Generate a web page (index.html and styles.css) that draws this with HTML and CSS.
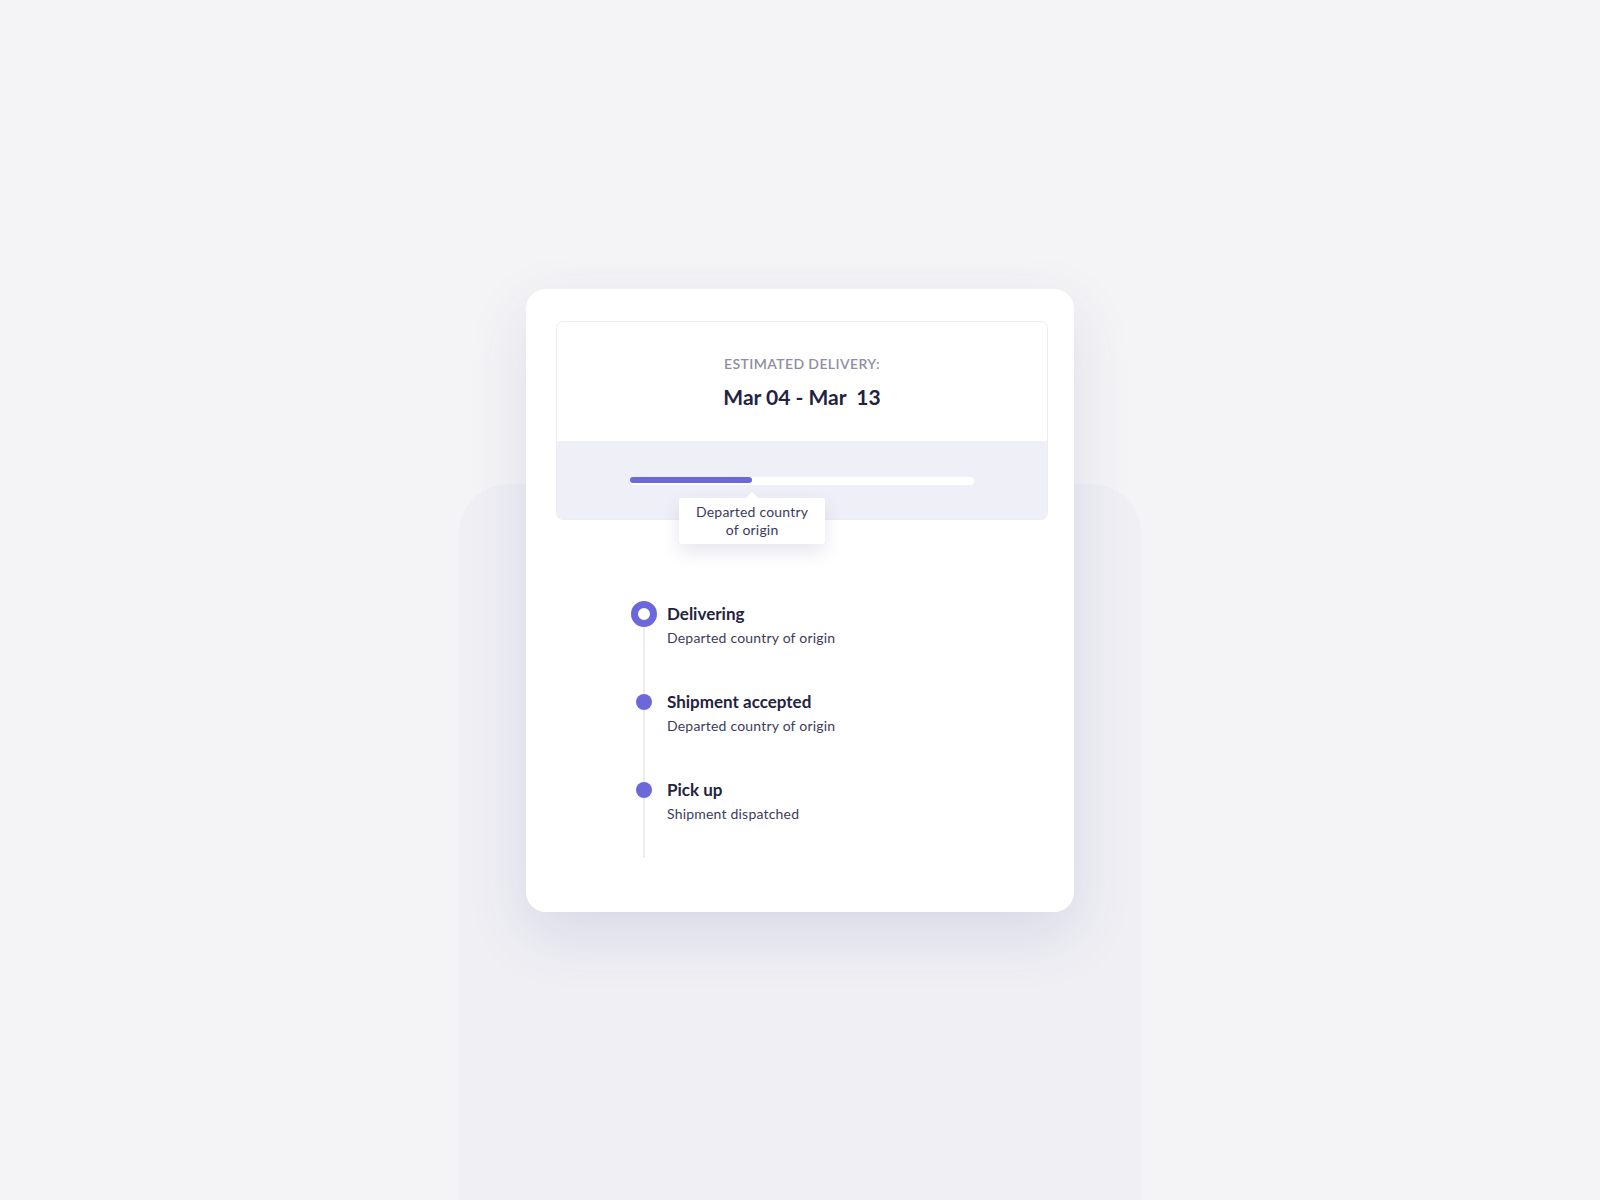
FILE: index.html
```html
<!DOCTYPE html>
<html lang="en">
<head>
    <meta charset="UTF-8">
    <meta name="viewport" content="width=device-width, initial-scale=1.0">
    <title>Tracking</title>
    <link rel="stylesheet" href="styles.css">
</head>
<body>
    <div class="stage">
        <div class="backdrop"></div>

        <div class="card">
            <div class="estimate">
                <div class="estimate-head">
                    <div class="estimate-label">Estimated delivery:</div>
                    <div class="estimate-date">Mar 04 - Mar&nbsp; 13</div>
                </div>
                <div class="estimate-progress">
                    <div class="track">
                        <div class="fill" style="width: 35.5%"></div>
                        <div class="tip" style="left: 35.5%">Departed country<br>of origin</div>
                    </div>
                </div>
            </div>

            <ul class="timeline">
                <li class="step">
                    <span class="marker current"></span>
                    <div class="step-text">
                        <div class="step-title">Delivering</div>
                        <div class="step-sub">Departed country of origin</div>
                    </div>
                </li>
                <li class="step">
                    <span class="marker"></span>
                    <div class="step-text">
                        <div class="step-title">Shipment accepted</div>
                        <div class="step-sub">Departed country of origin</div>
                    </div>
                </li>
                <li class="step">
                    <span class="marker"></span>
                    <div class="step-text">
                        <div class="step-title">Pick up</div>
                        <div class="step-sub">Shipment dispatched</div>
                    </div>
                </li>
            </ul>
        </div>
    </div>
</body>
</html>
```

FILE: styles.css
```css
body{
    margin: 0;
    font-family: "Lato", "Noto Sans", sans-serif;
    color: #24233f;
    background-color: #f4f4f6;
}
.stage{
    position: relative;
    height: 1200px;
    overflow: hidden;
    padding-top: 289px;
    box-sizing: border-box;
}
.backdrop{
    position: absolute;
    left: 459px;
    top: 484px;
    width: 682px;
    height: 800px;
    border-radius: 50px;
    background-color: #efeff4;
}
.card{
    position: relative;
    width: 548px;
    margin: 0 auto;
    padding: 32px 26px 47px 30px;
    box-sizing: border-box;
    background-color: #fff;
    border-radius: 20px;
    box-shadow: 0 22px 60px rgba(70, 70, 150, 0.13);
}
.estimate{
    border: 1px solid #ececf4;
    border-radius: 7px;
}
.estimate-head{
    padding: 33px 0 31px;
    text-align: center;
}
.estimate-label{
    font-size: 14px;
    line-height: 18px;
    font-weight: 600;
    text-transform: uppercase;
    letter-spacing: 0.4px;
    color: #8f8ea4;
}
.estimate-date{
    margin-top: 11px;
    font-size: 21px;
    line-height: 26px;
    font-weight: 700;
    color: #24233f;
}
.estimate-progress{
    height: 78px;
    padding-top: 35px;
    box-sizing: border-box;
    background-color: #efeff8;
    border-radius: 0 0 6px 6px;
}
.track{
    position: relative;
    width: 344px;
    height: 8px;
    margin: 0 auto;
    background-color: #fff;
    border-radius: 4px;
}
.fill{
    height: 6px;
    margin-top: 1px;
    background-color: #6b69d9;
    border-radius: 3px;
}
.tip{
    position: absolute;
    top: 21px;
    width: 146px;
    padding: 5px 0;
    transform: translateX(-50%);
    background-color: #fff;
    border-radius: 3px;
    box-shadow: 0 8px 18px rgba(60, 60, 120, 0.13);
    font-size: 14px;
    line-height: 18px;
    letter-spacing: 0.2px;
    text-align: center;
    color: #3b3a58;
}
.tip::before{
    content: "";
    position: absolute;
    top: -12px;
    left: 50%;
    margin-left: -6px;
    border: 6px solid transparent;
    border-bottom-color: #fff;
}
.timeline{
    position: relative;
    list-style: none;
    margin: 81px 0 0 75px;
    padding: 0;
}
.timeline::before{
    content: "";
    position: absolute;
    left: 12px;
    top: 13px;
    bottom: 7px;
    width: 2px;
    background-color: #ececf3;
}
.step{
    position: relative;
    display: flex;
    gap: 10px;
    height: 88px;
}
.marker{
    width: 16px;
    height: 16px;
    margin: 5px;
    border-radius: 50%;
    background-color: #6b69d9;
    flex-shrink: 0;
}
.marker.current{
    width: 26px;
    height: 26px;
    margin: 0;
    border: 7px solid #6b69d9;
    box-sizing: border-box;
    background-color: #fff;
}
.step-title{
    font-size: 17px;
    line-height: 26px;
    font-weight: 700;
    color: #24233f;
}
.step-sub{
    margin-top: 2px;
    font-size: 14px;
    line-height: 18px;
    letter-spacing: 0.2px;
    color: #3d3c5a;
}
```
